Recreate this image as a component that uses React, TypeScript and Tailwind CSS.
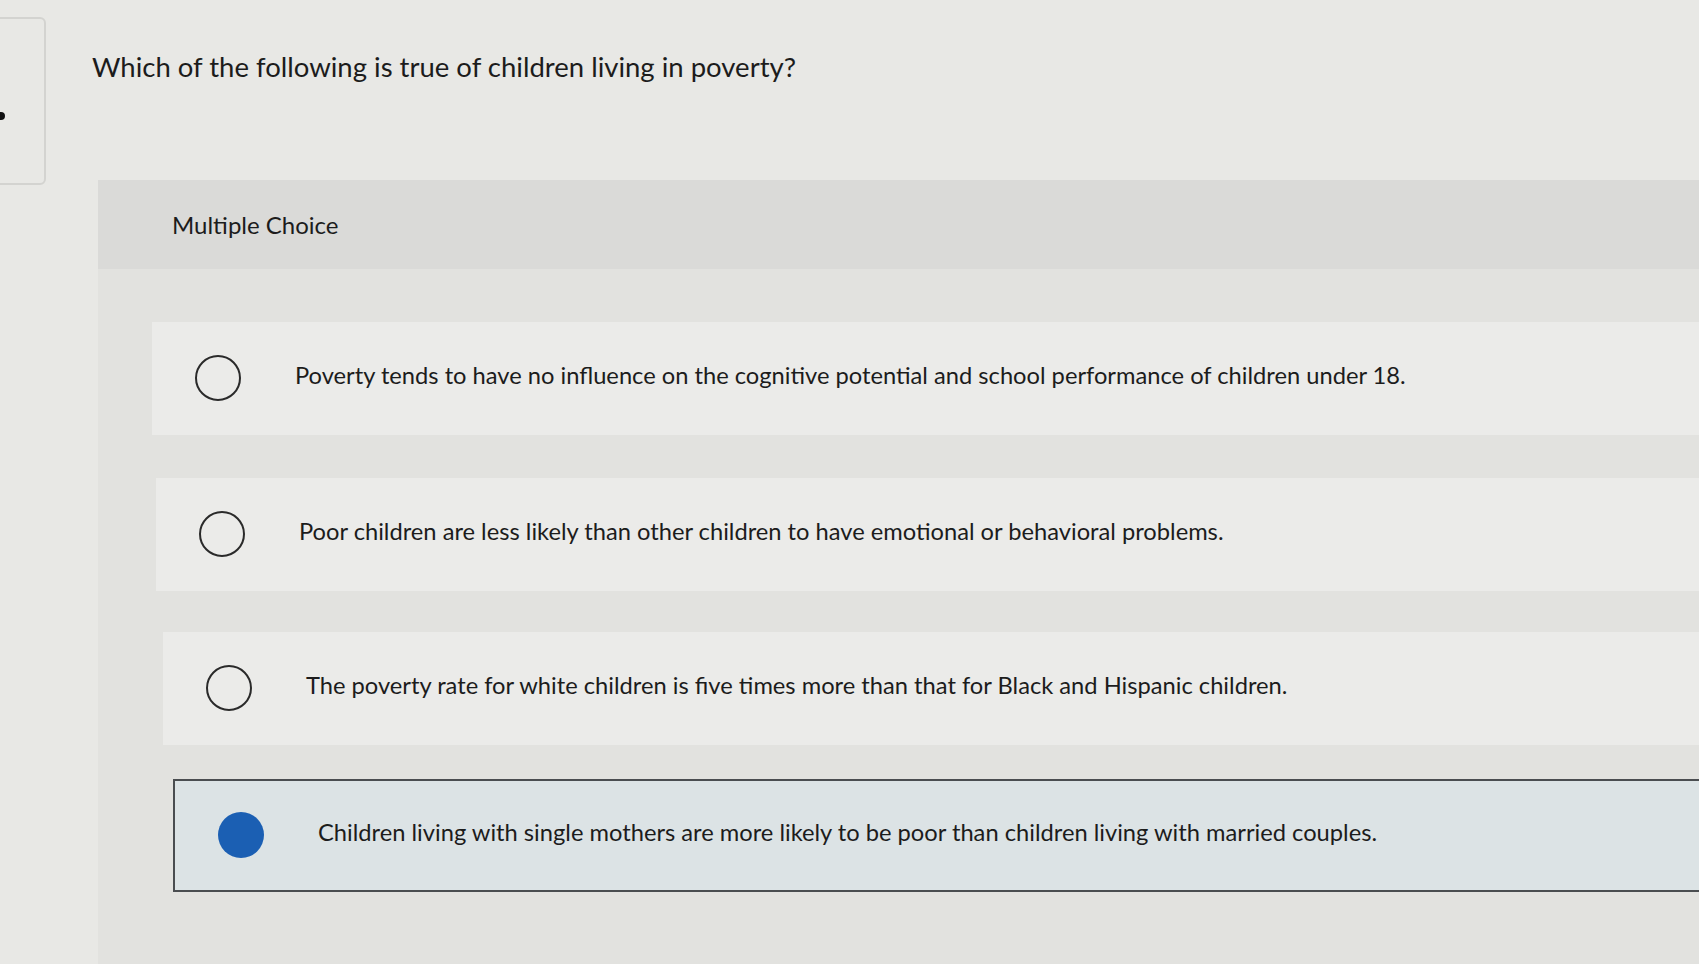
import React from "react";

const options = [
  {
    text: "Poverty tends to have no influence on the cognitive potential and school performance of children under 18.",
    box: "ml-[152px] mt-[53px]",
    selected: false,
  },
  {
    text: "Poor children are less likely than other children to have emotional or behavioral problems.",
    box: "ml-[156px] mt-[43px]",
    selected: false,
  },
  {
    text: "The poverty rate for white children is five times more than that for Black and Hispanic children.",
    box: "ml-[163px] mt-[41px]",
    selected: false,
  },
  {
    text: "Children living with single mothers are more likely to be poor than children living with married couples.",
    box: "ml-[173px] mt-[34px]",
    selected: true,
  },
];

export default function App() {
  return (
    <div
      className="relative w-[1699px] h-[964px] overflow-hidden bg-[#e8e8e5] text-[#1c1c1c]"
      style={{ fontFamily: "Lato, 'Open Sans', sans-serif" }}
    >
      {/* faint left sidebar box */}
      <div className="absolute left-[-6px] top-[17px] w-[52px] h-[168px] rounded-[6px] border-2 border-[#d3d3d0]" />
      <div className="absolute left-[-3px] top-[112px] w-[8px] h-[8px] rounded-full bg-[#111]" />

      <div className="pt-[50px] pl-[92px]">
        <h1 className="text-[27.5px] leading-[34px] font-normal">
          Which of the following is true of children living in poverty?
        </h1>
      </div>

      <div className="mt-[96px] ml-[98px] bg-[#e2e2df] h-[800px]">
        <div className="h-[89px] bg-[#dadad8] pl-[74px] flex items-center">
          <span className="text-[24px]">Multiple Choice</span>
        </div>

        <div className="flex flex-col -ml-[98px]">
          {options.map((o, i) => (
            <div
              key={i}
              className={
                o.box +
                " h-[113px] flex items-center " +
                (o.selected
                  ? "bg-[#dce3e5] border-2 border-r-0 border-[#4a4d50]"
                  : "bg-[#ebebe9]")
              }
            >
              <div className="ml-[43px] w-[48px] h-[48px] shrink-0">
                {o.selected ? (
                  <div className="w-[46px] h-[46px] rounded-full bg-[#1b5fb3]" />
                ) : (
                  <div className="w-[46px] h-[46px] rounded-full border-2 border-[#2a2a2a]" />
                )}
              </div>
              <div className="ml-[52px] mb-[8px] text-[23.7px] leading-[30px]">{o.text}</div>
            </div>
          ))}
        </div>
      </div>
    </div>
  );
}
